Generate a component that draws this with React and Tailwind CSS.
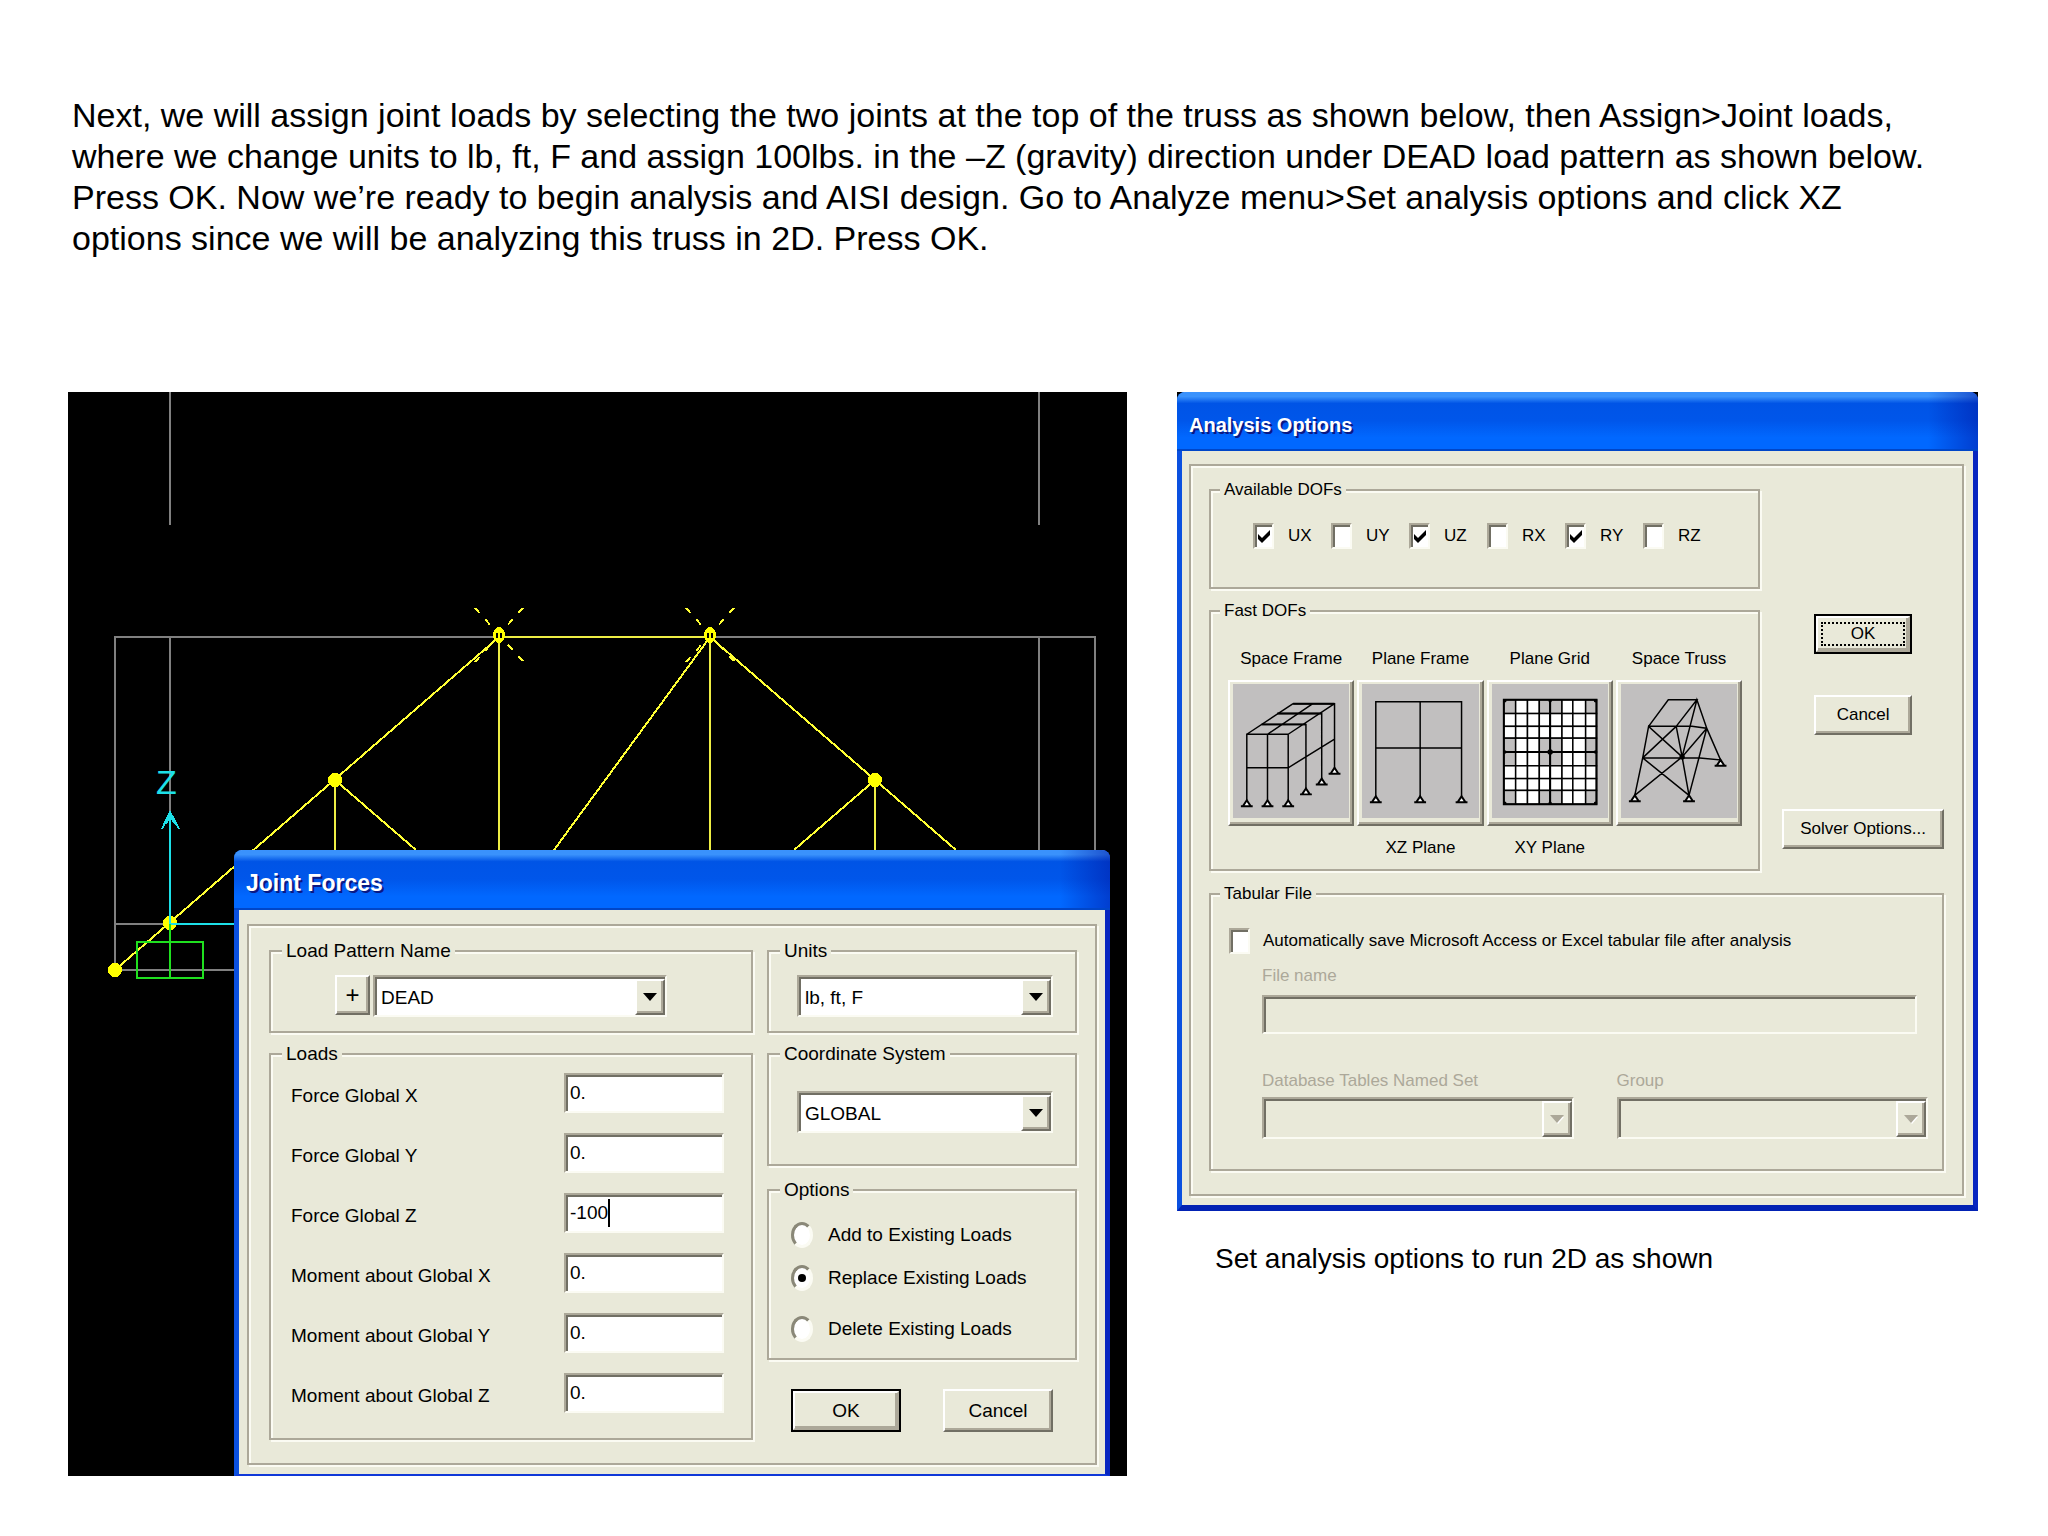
import React, { useState } from 'react';

const RAISED = 'bg-[#e9e9d9] border-2 border-t-white border-l-white border-b-[#716f64] border-r-[#716f64] shadow-[inset_-2px_-2px_0_#aca899]';
const SUNKEN = 'border-2 border-t-[#aca899] border-l-[#aca899] border-b-[#fbfbf3] border-r-[#fbfbf3] shadow-[inset_2px_2px_0_#716f64] rounded-none';

function Window({ title, titleClass, className, bodyClass, children }) {
  return (
    <section className={`flex flex-col rounded-t-lg border-l-[5px] border-r-[5px] border-l-[#0a50e0] border-r-[#0826c0] bg-[#e9e9d9] text-black ${className}`}>
      <header className={`-mx-[5px] flex items-center rounded-t-lg border-b-2 border-b-[#0046c8] bg-[linear-gradient(to_right,transparent_calc(100%-50px),rgba(0,20,160,0.5)),linear-gradient(to_bottom,#3a92fc,#3a92fc_8%,#0054e6_20%,#0056ea_50%,#0168ff_80%)] px-3 pt-2 font-bold text-white [text-shadow:2px_2px_0_#0a1883] ${titleClass}`}>
        <h2>{title}</h2>
      </header>
      <div className={bodyClass}>{children}</div>
    </section>
  );
}

function Group({ legend, className, legendClass, children }) {
  return (
    <fieldset className={`min-w-0 border-2 border-[#aca899] shadow-[2px_2px_0_#fbfbf3,inset_2px_2px_0_#fbfbf3] ${className}`}>
      <legend className={`bg-[#e9e9d9] ${legendClass}`}>{legend}</legend>
      {children}
    </fieldset>
  );
}

function Button({ children, primary, focused, className = '' }) {
  return (
    <button type="button" className={`${RAISED} flex items-center justify-center whitespace-nowrap ${primary ? 'outline-2 -outline-offset-2 outline-black border-4! border-r-[#aca899]! border-b-[#aca899]!' : ''} ${className}`}>
      {focused ? <span className="flex h-6 w-[84px] items-center justify-center border-2 border-dotted border-black">{children}</span> : children}
    </button>
  );
}

function Combo({ label, options, disabled, id, className = '' }) {
  return (
    <div className={`relative h-[42px] ${className}`}>
      <select id={id} aria-label={label} disabled={disabled} className={`${SUNKEN} size-full appearance-none px-[6px] pt-[3px] opacity-100 ${disabled ? 'bg-[#e9e9d9]' : 'bg-white'}`}>
        {options.map((o) => <option key={o}>{o}</option>)}
      </select>
      <span className={`${RAISED} pointer-events-none absolute top-1 right-[2px] bottom-[2px] flex w-[30px] items-center justify-center`}>
        <svg width="14" height="9" viewBox="0 0 14 9">
          {disabled && <path d="M2 2h12L8 9z" fill="#fff" />}
          <path d="M0 0h14L7 8z" fill={disabled ? '#aca899' : '#000'} />
        </svg>
      </span>
    </div>
  );
}

function CheckBox({ label, defaultChecked, className = '' }) {
  return (
    <label className={`flex items-center ${className}`}>
      <span className="relative h-[26px] w-[21px] shrink-0">
        <input type="checkbox" defaultChecked={defaultChecked} className={`${SUNKEN} peer block size-full appearance-none bg-white`} />
        <svg className="pointer-events-none absolute top-[6px] left-1 hidden peer-checked:block" width="14" height="15" viewBox="0 0 14 15">
          <path d="M1 5l4 4 8-8v5l-8 8-4-4z" fill="#000" />
        </svg>
      </span>
      {label}
    </label>
  );
}

function Radio({ label, checked, onChange, className = '' }) {
  return (
    <label className={`flex h-7 items-center gap-[15px] whitespace-nowrap ${className}`}>
      <span className="relative h-[26px] w-[22px] shrink-0">
        <input type="radio" name="load-mode" checked={checked} onChange={onChange} className="peer block size-full appearance-none rounded-[50%] border-[3px] border-[#fbfbf3] border-t-[#8a8878] border-l-[#8a8878] bg-white" />
        <span className="pointer-events-none absolute top-[9px] left-[7px] hidden size-2 rounded-full bg-black peer-checked:block" />
      </span>
      {label}
    </label>
  );
}

function Joint({ x, y, selected }) {
  return (
    <g>
      <ellipse cx={x} cy={y} rx={selected ? 6 : 7} ry={selected ? 8 : 7} fill="#ff0" />
      {selected && (
        <>
          <path d={`M${x - 2} ${y - 2}v5M${x + 2} ${y - 2}v5`} stroke="#000" strokeWidth="2" />
          <path
            d={`M${x - 24} ${y - 27}L${x - 6} ${y - 7}M${x + 24} ${y - 27}L${x + 6} ${y - 7}M${x - 24} ${y + 27}L${x - 6} ${y + 7}M${x + 24} ${y + 26}L${x + 6} ${y + 7}`}
            stroke="#ff3" strokeWidth="2" strokeDasharray="7 8"
          />
        </>
      )}
    </g>
  );
}

function TrussCanvas() {
  return (
    <svg className="absolute inset-0 size-full" viewBox="0 0 1059 1085" preserveAspectRatio="xMinYMin slice" fill="none" shapeRendering="crispEdges" aria-label="Truss elevation">
      {/* grid lines */}
      <path d="M102 0v133M971 0v133M47 578V245H1027V578M102 245V420M971 245V500M47 532H102M47 578H200" stroke="#808080" strokeWidth="2" />
      {/* truss members */}
      <path d="M431 245H642M431 245V470M642 245V470M267 388V470M807 388V470" stroke="#ee4" strokeWidth="2" />
      <path d="M47 578L431 245M267 388L348 458M642 245L486 458M642 245L888 458M807 388L726 458" stroke="#ff3" strokeWidth="2" />
      <Joint x={47} y={578} />
      <Joint x={102} y={531} />
      <Joint x={267} y={388} />
      <Joint x={431} y={243} selected />
      <Joint x={642} y={243} selected />
      <Joint x={807} y={388} />
      {/* origin axes */}
      <path d="M102 532V420M102 532H200M94 437L102 420L111 437M98 432L102 424L107 432" stroke="#1de0e8" strokeWidth="2" />
      <text x="88" y="402" fill="#1de0e8" fontSize="34" fontFamily="'Liberation Sans', sans-serif">Z</text>
      <path d="M69 550H135V586H69zM102 532V586" stroke="#1fe01f" strokeWidth="2" />
    </svg>
  );
}

function Support({ x, y }) {
  return <path d={`M${x} ${y}l-4 6h8zM${x - 6} ${y + 6}h12`} fill="#fff" strokeWidth="2" />;
}

function FrameIcon({ children }) {
  return (
    <svg className="size-full bg-[#c1bfbf]" viewBox="0 0 118 134" fill="none" stroke="#000" strokeWidth="1.5">
      {children}
    </svg>
  );
}

const GRID_X = [12, 24, 36, 48, 59, 71, 82, 95, 106];
const GRID_Y = [15, 29, 42, 54, 68, 82, 95, 107, 121];

function PlaneGridIcon() {
  const grey = [0, 3, 4, 7];
  return (
    <FrameIcon>
      {GRID_Y.slice(0, 8).map((y, r) =>
        GRID_X.slice(0, 8).map((x, c) => (
          <rect key={`${r}-${c}`} x={x} y={y} width={GRID_X[c + 1] - x} height={GRID_Y[r + 1] - y} fill={grey.includes(r) && grey.includes(c) ? '#c1bfbf' : '#fff'} />
        ))
      )}
      <path d="M12 15H106V121H12zM59 15V121M12 68H106" strokeWidth="2" />
      {[13, 59, 105].map((x) => [16, 68, 120].map((y) => <circle key={`${x}-${y}`} cx={x} cy={y} r={x === 59 && y === 68 ? 2 : 1} fill="#000" />))}
    </FrameIcon>
  );
}

const FAST_DOFS = [
  {
    name: 'Space Frame',
    plane: '',
    icon: (
      <FrameIcon>
        <path d="M14 117V50H56V117M35 50V117M14 84H56L103 55M74 107V40H29M90 97V29H45M103 86V19H61M14 50L61 19M35 50L81 19M56 50L103 19" />
        <path d="M29 40H74M45 29H90M61 19H103" strokeWidth="2" />
        <Support x={14} y={117} /><Support x={35} y={117} /><Support x={56} y={117} />
        <Support x={74} y={105} /><Support x={90} y={95} /><Support x={103} y={84} />
      </FrameIcon>
    ),
  },
  {
    name: 'Plane Frame',
    plane: 'XZ Plane',
    icon: (
      <FrameIcon>
        <path d="M14 113V17H101V113M59 17V113M14 64H101" />
        <Support x={14} y={113} /><Support x={59} y={113} /><Support x={101} y={113} />
      </FrameIcon>
    ),
  },
  { name: 'Plane Grid', plane: 'XY Plane', icon: <PlaneGridIcon /> },
  {
    name: 'Space Truss',
    plane: '',
    icon: (
      <FrameIcon>
        <path d="M28 42L48 15H77L56 42M28 42H72L87 44L77 15L62 73L56 42M87 44L62 73L28 42L22 74L56 42M22 74H80L101 76L87 44L69 112L62 73L14 112L22 74L69 112" />
        <circle cx="62" cy="73" r="2" fill="#000" />
        <Support x={14} y={112} /><Support x={69} y={112} /><Support x={101} y={76} />
      </FrameIcon>
    ),
  },
];

const LOADS = [
  ['Force Global X', '0.'],
  ['Force Global Y', '0.'],
  ['Force Global Z', '-100'],
  ['Moment about Global X', '0.'],
  ['Moment about Global Y', '0.'],
  ['Moment about Global Z', '0.'],
];

function JointForces() {
  const [mode, setMode] = useState('Replace Existing Loads');
  return (
    <Window
      title="Joint Forces"
      className="relative mt-[458px] mr-[17px] ml-[166px] border-b-2 border-b-[#1038d8] text-[19px] leading-7"
      titleClass="h-[60px] text-[23px]"
      bodyClass="px-2 pt-[14px] pb-[9px]"
    >
      <div className="grid grid-cols-[484fr_310fr] gap-x-[14px] border-2 border-[#aca899] pt-[11px] pr-[18px] pb-[23px] pl-5 shadow-[2px_2px_0_#fbfbf3,inset_2px_2px_0_#fbfbf3]">
        <div className="flex flex-col gap-[7px]">
          <Group legend="Load Pattern Name" className="pt-[10px] pr-[84px] pb-[14px] pl-16" legendClass="-ml-[53px] px-1">
            <div className="flex gap-[3px]">
              <Button className="h-10 w-[35px] text-2xl">+</Button>
              <Combo label="Load Pattern Name" options={['DEAD']} className="flex-1" />
            </div>
          </Group>
          <Group legend="Loads" className="flex flex-col gap-5 pt-[5px] pr-[27px] pb-[25px] pl-5" legendClass="-ml-[9px] px-1">
            {LOADS.map(([name, value]) => (
              <label key={name} className="flex h-10 items-center justify-between">
                <span className="pt-[5px]">{name}</span>
                <span className="relative h-full w-[160px]">
                  <input type="text" defaultValue={value} className={`${SUNKEN} block size-full bg-white px-1`} />
                  {value === '-100' && <span className="absolute top-[6px] left-[44px] h-7 w-[2px] bg-black" />}
                </span>
              </label>
            ))}
          </Group>
        </div>
        <div>
          <Group legend="Units" className="pt-[10px] pr-[22px] pb-[14px] pl-7" legendClass="-ml-[17px] px-1">
            <Combo label="Units" options={['lb, ft, F']} />
          </Group>
          <Group legend="Coordinate System" className="mt-[7px] pt-[23px] pr-[22px] pb-[31px] pl-7" legendClass="-ml-[17px] px-1">
            <Combo label="Coordinate System" options={['GLOBAL']} />
          </Group>
          <Group legend="Options" className="mt-[10px] pt-[17px] pr-3 pb-[15px] pl-[22px]" legendClass="-ml-[11px] px-1">
            <Radio label="Add to Existing Loads" checked={mode === 'Add to Existing Loads'} onChange={() => setMode('Add to Existing Loads')} />
            <Radio label="Replace Existing Loads" checked={mode === 'Replace Existing Loads'} onChange={() => setMode('Replace Existing Loads')} className="mt-[15px]" />
            <Radio label="Delete Existing Loads" checked={mode === 'Delete Existing Loads'} onChange={() => setMode('Delete Existing Loads')} className="mt-[23px]" />
          </Group>
          <div className="mt-[29px] flex gap-[42px] pl-6">
            <Button primary className="h-[43px] w-[110px]">OK</Button>
            <Button className="h-[43px] w-[110px]">Cancel</Button>
          </div>
        </div>
      </div>
    </Window>
  );
}

function AnalysisOptions() {
  return (
    <div className="bg-black">
      <Window
        title="Analysis Options"
        className="border-b-[6px] border-b-[#0222b4] text-[17px] leading-6"
        titleClass="h-[59px] text-xl"
        bodyClass="pt-[13px] pr-[9px] pb-[9px] pl-[7px]"
      >
        <div className="border-2 border-[#aca899] px-[18px] pt-3 pb-[23px] shadow-[2px_2px_0_#fbfbf3,inset_2px_2px_0_#fbfbf3]">
          <div className="grid grid-cols-[552fr_184fr]">
            <div>
              <Group legend="Available DOFs" className="pt-[21px] pb-[38px] pl-[42px]" legendClass="-ml-[33px] px-1">
                <div className="flex">
                  {['UX', 'UY', 'UZ', 'RX', 'RY', 'RZ'].map((dof) => (
                    <CheckBox key={dof} label={dof} defaultChecked={['UX', 'UZ', 'RY'].includes(dof)} className="w-[78px] gap-[14px]" />
                  ))}
                </div>
              </Group>
              <Group legend="Fast DOFs" className="mt-[10px] pt-6 pr-4 pb-[9px] pl-[17px]" legendClass="-ml-2 px-1">
                <div className="grid grid-cols-4 gap-x-[3px]">
                  {FAST_DOFS.map((f) => (
                    <div key={f.name} className="flex flex-col items-center">
                      <span>{f.name}</span>
                      <button type="button" aria-label={f.name} className={`${RAISED} mt-[9px] h-[146px] w-full pt-[2px] pr-[3px] pb-[6px] pl-[3px]`}>
                        {f.icon}
                      </button>
                      <span className="mt-[10px] h-6">{f.plane}</span>
                    </div>
                  ))}
                </div>
              </Group>
            </div>
            <div className="flex flex-col items-center pt-[136px] pl-[22px]">
              <Button primary focused className="h-10 w-[98px]">OK</Button>
              <Button className="mt-[41px] h-10 w-[98px]">Cancel</Button>
              <Button className="mt-[74px] h-10 w-full">Solver Options...</Button>
            </div>
          </div>
          <Group legend="Tabular File" className="mt-[11px] pt-[22px] pb-[30px] pl-[18px]" legendClass="-ml-[9px] px-1">
            <CheckBox label="Automatically save Microsoft Access or Excel tabular file after analysis" className="gap-[13px]" />
            <div className="mt-[10px] pr-[25px] pl-[33px] text-[#aca899]">
              <label htmlFor="file-name" className="block">File name</label>
              <input id="file-name" type="text" disabled className={`${SUNKEN} mt-[7px] block h-[39px] w-full bg-[#e9e9d9]`} />
            </div>
            <div className="mt-[35px] grid grid-cols-2 gap-x-[43px] pr-[14px] pl-[33px] text-[#aca899]">
              <div>
                <label htmlFor="named-set" className="block">Database Tables Named Set</label>
                <Combo id="named-set" options={['']} disabled className="mt-1" />
              </div>
              <div>
                <label htmlFor="group" className="block">Group</label>
                <Combo id="group" options={['']} disabled className="mt-1" />
              </div>
            </div>
          </Group>
        </div>
      </Window>
    </div>
  );
}

export default function App() {
  return (
    <main className="min-h-screen bg-white pt-[95px] pr-[70px] pb-[60px] pl-[68px] font-['Liberation_Sans',Arial,sans-serif] text-black">
      <p className="pr-9 pl-1 text-[34px] leading-[41px]">
        Next, we will assign joint loads by selecting the two joints at the top of the truss as shown below, then
        Assign&gt;Joint loads, where we change units to lb, ft, F and assign 100lbs. in the –Z (gravity) direction under
        DEAD load pattern as shown below. Press OK. Now we’re ready to begin analysis and AISI design. Go to Analyze
        menu&gt;Set analysis options and click XZ options since we will be analyzing this truss in 2D. Press OK.
      </p>
      <div className="mt-[133px] grid grid-cols-[1059fr_801fr] items-start gap-x-[50px]">
        <div className="relative overflow-hidden bg-black">
          <TrussCanvas />
          <JointForces />
        </div>
        <figure>
          <AnalysisOptions />
          <figcaption className="mt-8 pl-[38px] text-[28px] leading-8">Set analysis options to run 2D as shown</figcaption>
        </figure>
      </div>
    </main>
  );
}
